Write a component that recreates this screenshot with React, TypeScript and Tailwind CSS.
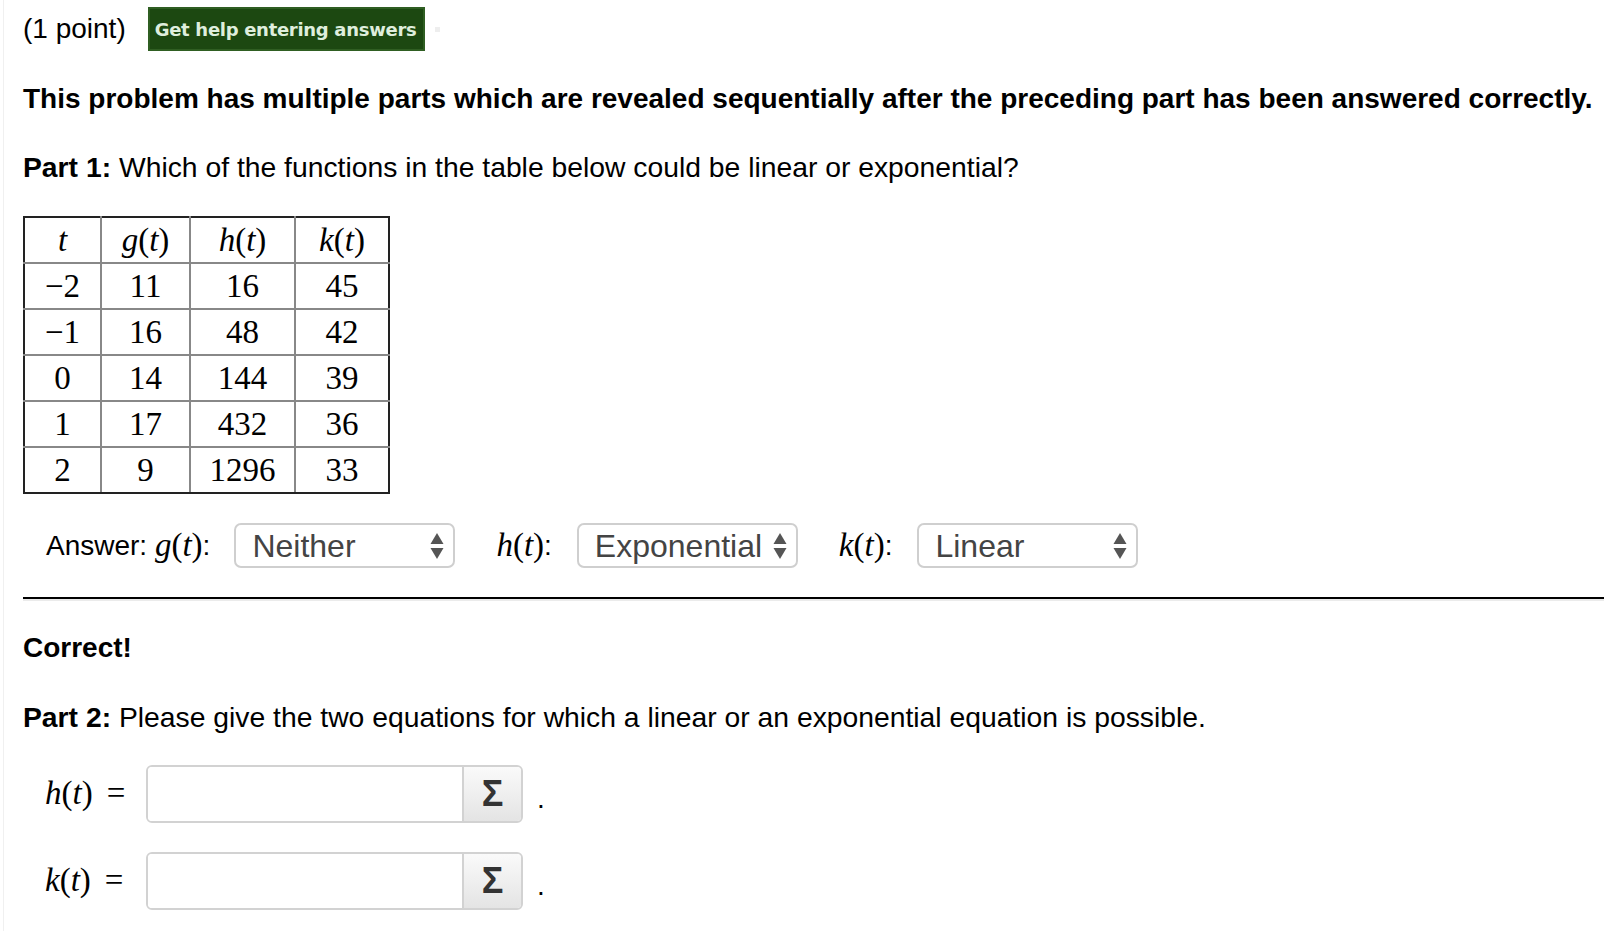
import React from 'react'

function M({ f }: { f: string }) {
  // math label like g(t), serif italic letters
  return (
    <span className="font-['Liberation_Serif',serif] text-[33px]">
      <i>{f}</i>(<i>t</i>)
    </span>
  )
}

function Arrows() {
  return (
    <svg width="14" height="30" viewBox="0 0 14 30" className="shrink-0">
      <path d="M7 2 L13.5 13 L0.5 13 Z" fill="#555" />
      <path d="M7 28 L13.5 17 L0.5 17 Z" fill="#555" />
    </svg>
  )
}

function Select({ value }: { value: string }) {
  return (
    <div className="flex h-[45px] w-[221px] items-center justify-between rounded-[7px] border-2 border-[#cfcfcf] bg-white pl-[16px] pr-[9px]">
      <span className="text-[32px] leading-none text-[#444]">{value}</span>
      <Arrows />
    </div>
  )
}

function MathInput({ f }: { f: string }) {
  return (
    <div className="flex h-[58px] items-center">
      <div className="w-[123px] pl-[22px] font-['Liberation_Serif',serif] text-[33px]">
        <i>{f}</i>(<i>t</i>)<span className="ml-[14px]">=</span>
      </div>
      <div className="flex h-[58px] w-[377px] overflow-hidden rounded-[6px] border-2 border-[#d2d2d2]">
        <div className="flex-1 bg-white" />
        <div className="flex w-[59px] items-center justify-center border-l-2 border-[#d2d2d2] bg-gradient-to-b from-[#fafafa] to-[#e4e4e4] text-[36px] font-bold text-[#333]">
          Σ
        </div>
      </div>
      <span className="ml-[14px] mt-[10px] text-[28px]">.</span>
    </div>
  )
}

const rows = [
  ['−2', '11', '16', '45'],
  ['−1', '16', '48', '42'],
  ['0', '14', '144', '39'],
  ['1', '17', '432', '36'],
  ['2', '9', '1296', '33'],
]

export default function App() {
  return (
    <div className="min-h-screen bg-white font-['Liberation_Sans',Arial,sans-serif] text-[28px] text-black">
      <div className="ml-[3px] min-h-screen border-l border-[#f0f0f0] pl-[19px]">
        {/* header row */}
        <div className="flex items-center pt-[7px]">
          <span className="leading-[32px]">(1 point)</span>
          <div className="ml-[22px] flex h-[44px] w-[277px] items-center border-2 border-[#2f5e22] bg-[#1c4811] pl-[5px] font-['DejaVu_Sans',sans-serif] text-[18px] font-bold tracking-[-0.3px] text-[#dfeedd]">
            Get help entering answers
          </div>
          <div className="ml-[10px] h-[5px] w-[5px] bg-[#eeeeee]" />
        </div>

        <p className="mt-[32px] whitespace-nowrap font-bold leading-[32px]">
          This problem has multiple parts which are revealed sequentially after the preceding part has been answered correctly.
        </p>

        <p className="mt-[36px] whitespace-nowrap text-[28.3px] leading-[32px]">
          <b>Part 1:</b> Which of the functions in the table below could be linear or exponential?
        </p>

        <table className="mt-[33px] border-collapse border-2 border-[#222] font-['Liberation_Serif',serif] text-[33px] leading-none">
          <thead>
            <tr className="h-[46px]">
              <th className="w-[77px] border-2 border-[#222] border-r-[#888] border-b-[#888] p-0 text-center font-normal">
                <i>t</i>
              </th>
              <th className="w-[89px] border-2 border-[#888] border-t-[#222] p-0 text-center font-normal">
                <i>g</i>(<i>t</i>)
              </th>
              <th className="w-[105px] border-2 border-[#888] border-t-[#222] p-0 text-center font-normal">
                <i>h</i>(<i>t</i>)
              </th>
              <th className="w-[94px] border-2 border-[#888] border-t-[#222] border-r-[#222] p-0 text-center font-normal">
                <i>k</i>(<i>t</i>)
              </th>
            </tr>
          </thead>
          <tbody>
            {rows.map((r, i) => (
              <tr key={i} className="h-[46px]">
                {r.map((c, j) => (
                  <td
                    key={j}
                    className={`border-2 border-[#888] p-0 text-center ${j === 0 ? 'border-l-[#222]' : ''} ${j === 3 ? 'border-r-[#222]' : ''} ${i === 4 ? 'border-b-[#222]' : ''}`}
                  >
                    {c}
                  </td>
                ))}
              </tr>
            ))}
          </tbody>
        </table>

        {/* answer row */}
        <div className="mt-[29px] flex h-[45px] items-center">
          <span className="ml-[23px]">Answer:&nbsp;</span>
          <M f="g" />
          <span>:</span>
          <div className="ml-[24px]">
            <Select value="Neither" />
          </div>
          <div className="ml-[41px] flex items-center">
            <M f="h" />
            <span>:</span>
          </div>
          <div className="ml-[25px]">
            <Select value="Exponential" />
          </div>
          <div className="ml-[41px] flex items-center">
            <M f="k" />
            <span>:</span>
          </div>
          <div className="ml-[25px]">
            <Select value="Linear" />
          </div>
        </div>

        <div className="mt-[29px]">
          <div className="h-[2px] bg-black" />
          <div className="h-[2px] bg-[#ebebeb]" />
        </div>

        <p className="mt-[31px] font-bold leading-[32px]">Correct!</p>

        <p className="mt-[37px] whitespace-nowrap text-[28.3px] leading-[32px]">
          <b>Part 2:</b> Please give the two equations for which a linear or an exponential equation is possible.
        </p>

        <div className="mt-[32px]">
          <MathInput f="h" />
        </div>
        <div className="mt-[29px]">
          <MathInput f="k" />
        </div>
      </div>
    </div>
  )
}
